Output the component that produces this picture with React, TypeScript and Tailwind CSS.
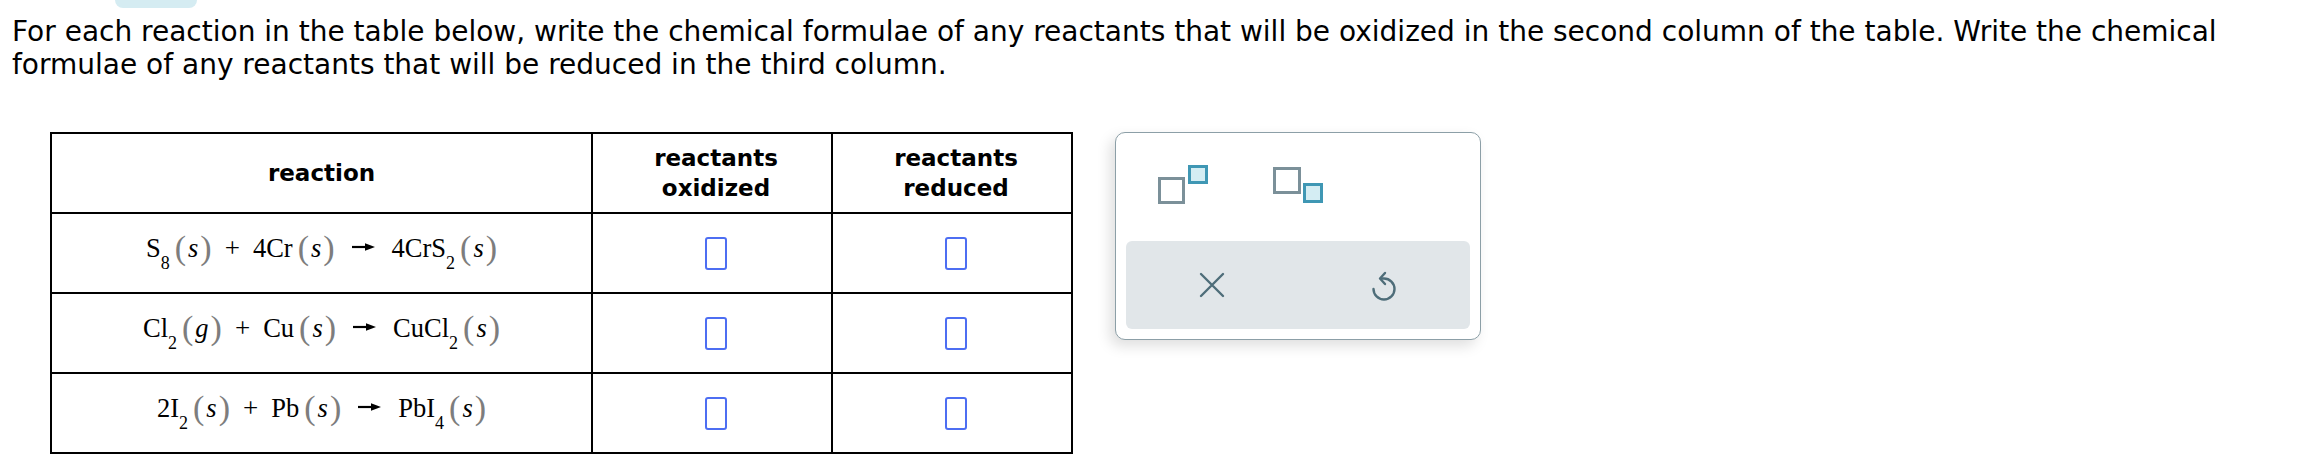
import React from "react";

function Sub({ children }: { children: React.ReactNode }) {
  return (
    <span className="relative top-[12px] text-[18px] leading-none">{children}</span>
  );
}

function Phase({ s }: { s: string }) {
  return (
    <span className="ml-[5px]">
      <span className="relative top-[2px] text-[34px] leading-none text-[#7d7d7d]">(</span>
      <span className="px-[2px] italic">{s}</span>
      <span className="relative top-[2px] text-[34px] leading-none text-[#7d7d7d]">)</span>
    </span>
  );
}

function Plus() {
  return <span className="mx-[13px] text-[27px]">+</span>;
}

function Arrow() {
  return (
    <svg
      width="23"
      height="10"
      viewBox="0 0 23 10"
      className="relative top-[-4px] mx-[17px] inline-block"
    >
      <line x1="0" y1="5" x2="15" y2="5" stroke="#000" strokeWidth="2.2" />
      <path d="M13 1.2 L23 5 L13 8.8 Z" fill="#000" />
    </svg>
  );
}

function AnswerBox() {
  return (
    <span className="ml-[8px] inline-block h-[33px] w-[22px] rounded-[3px] border-2 border-[#4d6ef2] align-middle" />
  );
}

function Row({ children }: { children: React.ReactNode }) {
  return (
    <tr>
      <td className="h-[80px] whitespace-nowrap border-2 border-black pb-[14px] text-center font-[family-name:'Liberation_Serif',serif] text-[26.5px] leading-[30px]">
        {children}
      </td>
      <td className="border-2 border-black text-center">
        <AnswerBox />
      </td>
      <td className="border-2 border-black text-center">
        <AnswerBox />
      </td>
    </tr>
  );
}

function ToolPanel() {
  return (
    <div className="ml-[42px] w-[366px] rounded-[10px] border-[1.5px] border-[#8c9fa7] bg-white p-[10px] shadow-[-5px_6px_14px_rgba(0,0,0,0.13)]">
      <div className="grid h-[98px] grid-cols-3 items-start pt-[22px]">
        <div className="flex justify-center">
          <div className="flex items-start">
            <div className="mt-[12px] h-[27px] w-[27px] border-[3px] border-[#7b9099] bg-white" />
            <div className="ml-[3px] h-[19px] w-[20px] border-[3px] border-[#3f97b4] bg-[#d4edf3]" />
          </div>
        </div>
        <div className="flex justify-center">
          <div className="mt-[2px] flex items-start">
            <div className="h-[27px] w-[28px] border-[3px] border-[#7b9099] bg-white" />
            <div className="ml-[2px] mt-[16px] h-[20px] w-[20px] border-[3px] border-[#3f97b4] bg-[#d4edf3]" />
          </div>
        </div>
        <div />
      </div>
      <div className="grid h-[88px] grid-cols-2 items-center rounded-[6px] bg-[#e1e6e9]">
        <div className="flex justify-center">
          <svg width="26" height="26" viewBox="0 0 26 26">
            <path d="M2 2 L24 24 M24 2 L2 24" stroke="#4e6d79" strokeWidth="2.4" strokeLinecap="round" />
          </svg>
        </div>
        <div className="flex justify-center">
          <svg width="28" height="34" viewBox="0 0 28 34" fill="none">
            <path
              d="M3.5 21 A10.5 10.5 0 1 0 14 10.5 H11"
              stroke="#4e6d79"
              strokeWidth="2.4"
              strokeLinecap="round"
            />
            <path
              d="M15 5 L10 10.5 L15 16"
              stroke="#4e6d79"
              strokeWidth="2.4"
              strokeLinecap="round"
              strokeLinejoin="round"
            />
          </svg>
        </div>
      </div>
    </div>
  );
}

export default function App() {
  return (
    <div className="h-[459px] w-full bg-white font-[family-name:'DejaVu_Sans',sans-serif] text-black">
      <div className="ml-[115px] h-[8px] w-[82px] rounded-b-[12px] bg-[#d5ecf2]" />
      <p className="ml-[12px] mt-[7px] w-[2270px] text-[28px] leading-[33px]">
        For each reaction in the table below, write the chemical formulae of any reactants that
        will be oxidized in the second column of the table. Write the chemical formulae of any
        reactants that will be reduced in the third column.
      </p>

      <div className="mt-[51px] flex items-start pl-[50px]">
        <table className="w-[1023px] border-collapse border-2 border-black">
          <thead>
            <tr>
              <th className="h-[80px] w-[541px] border-2 border-black text-[23px] font-bold leading-[30px]">
                reaction
              </th>
              <th className="w-[240px] border-2 border-black pl-[8px] text-[23px] font-bold leading-[30px]">
                reactants
                <br />
                oxidized
              </th>
              <th className="border-2 border-black pl-[8px] text-[23px] font-bold leading-[30px]">
                reactants
                <br />
                reduced
              </th>
            </tr>
          </thead>
          <tbody>
            <Row>
              S<Sub>8</Sub>
              <Phase s="s" />
              <Plus />
              4Cr
              <Phase s="s" />
              <Arrow />
              4CrS<Sub>2</Sub>
              <Phase s="s" />
            </Row>
            <Row>
              Cl<Sub>2</Sub>
              <Phase s="g" />
              <Plus />
              Cu
              <Phase s="s" />
              <Arrow />
              CuCl<Sub>2</Sub>
              <Phase s="s" />
            </Row>
            <Row>
              2I<Sub>2</Sub>
              <Phase s="s" />
              <Plus />
              Pb
              <Phase s="s" />
              <Arrow />
              PbI<Sub>4</Sub>
              <Phase s="s" />
            </Row>
          </tbody>
        </table>
        <ToolPanel />
      </div>
    </div>
  );
}
